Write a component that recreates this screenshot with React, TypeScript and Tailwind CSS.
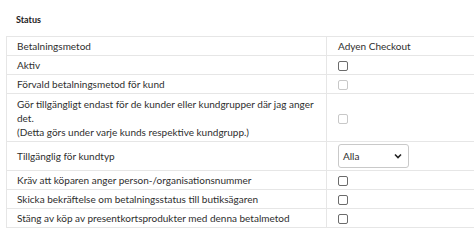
import React from 'react';

function Check({ disabled }: { disabled?: boolean }) {
  return (
    <span
      className={`inline-block w-[10px] h-[10px] rounded-[2px] border align-middle ${
        disabled ? 'border-[#c8c8c8]' : 'border-[#6b6b6b]'
      } bg-white`}
    />
  );
}

const rows: { label: React.ReactNode; cell: React.ReactNode }[] = [
  { label: 'Aktiv', cell: <Check /> },
  { label: 'Förvald betalningsmetod för kund', cell: <Check disabled /> },
  {
    label: (
      <div className="py-[0.5px]">
        Gör tillgängligt endast för de kunder eller kundgrupper där jag anger
        <br />
        det.
        <br />
        (Detta görs under varje kunds respektive kundgrupp.)
      </div>
    ),
    cell: <Check disabled />,
  },
  {
    label: 'Tillgänglig för kundtyp',
    cell: (
      <div className="w-[71px] h-[24px] border border-[#c9c9c9] rounded-[3px] bg-white flex items-center justify-between pl-[4px] pr-[6px]">
        <span>Alla</span>
        <svg width="8" height="6" viewBox="0 0 8 6" fill="none">
          <path d="M1 1.5 L4 4.5 L7 1.5" stroke="#222" strokeWidth="1.6" />
        </svg>
      </div>
    ),
  },
  { label: 'Kräv att köparen anger person-/organisationsnummer', cell: <Check /> },
  { label: 'Skicka bekräftelse om betalningsstatus till butiksägaren', cell: <Check /> },
  { label: 'Stäng av köp av presentkortsprodukter med denna betalmetod', cell: <Check /> },
];

export default function App() {
  return (
    <div
      className="w-[474px] h-[240px] overflow-hidden bg-white text-[#2e2e2e] relative"
      style={{ fontFamily: 'Lato, "Open Sans", sans-serif' }}
    >
      <div className="pl-[16px] pt-[13px] h-[36px] text-[9px] font-bold text-[#222]">Status</div>
      <div className="pl-[6px]">
        <table className="w-[500px] border-collapse text-[10px] leading-[14px] table-fixed">
          <colgroup>
            <col className="w-[320px]" />
            <col />
          </colgroup>
          <tbody>
            <tr className="border border-[#e6e6e6]">
              <td className="px-[10px] py-[2px] border-r border-[#e6e6e6]">Betalningsmetod</td>
              <td className="px-[11px] py-[2px]">Adyen Checkout</td>
            </tr>
            {rows.map((r, i) => (
              <tr key={i} className="border border-[#e6e6e6]">
                <td className="px-[10px] py-[2px] border-r border-[#e6e6e6] align-middle whitespace-nowrap">
                  {r.label}
                </td>
                <td className="px-[11px] py-[2px] align-middle">{r.cell}</td>
              </tr>
            ))}
          </tbody>
        </table>
      </div>
    </div>
  );
}
